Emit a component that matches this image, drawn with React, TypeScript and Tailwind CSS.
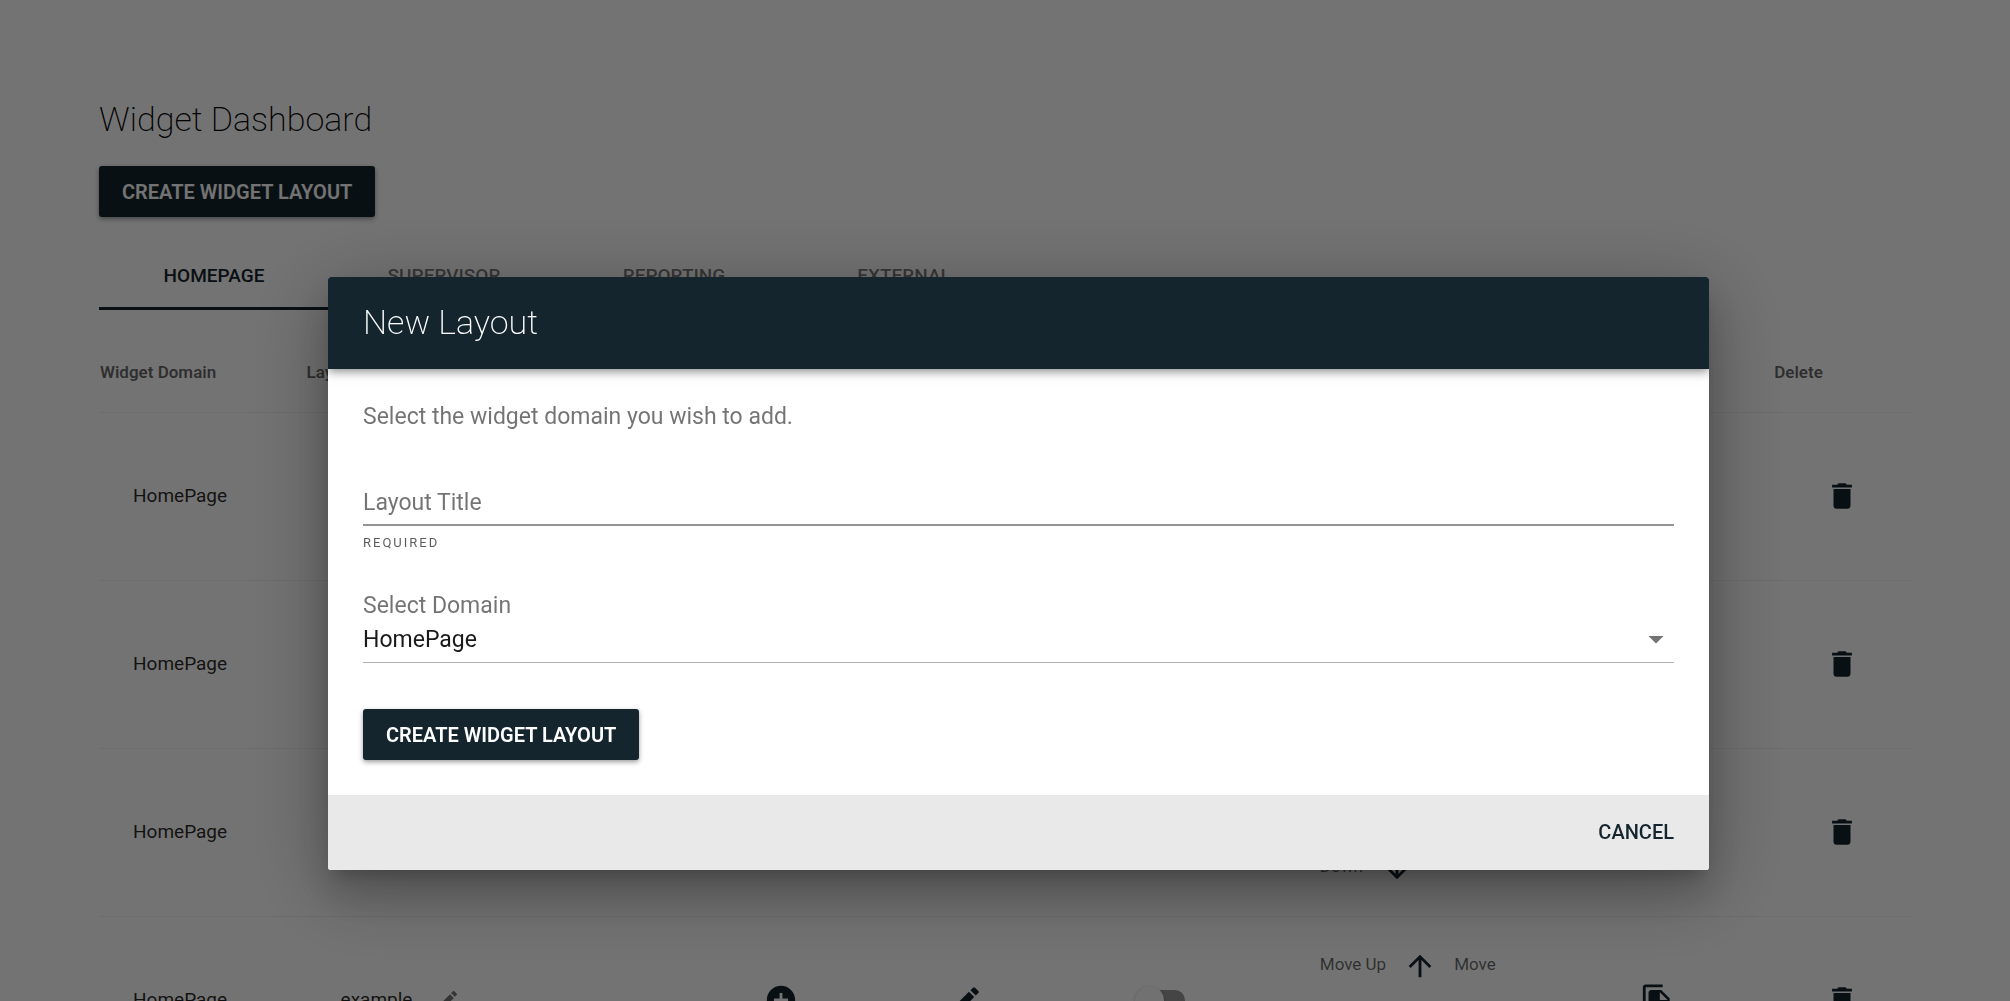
import React, { useState } from 'react';
import { MdAddCircle, MdArrowDownward, MdArrowDropDown, MdArrowUpward, MdDelete, MdEdit, MdFileCopy } from 'react-icons/md';

interface LayoutRow {
  id: number;
  domain: string;
  title: string;
  active: boolean;
}

const tabs = ['Homepage', 'Supervisor', 'Reporting', 'External'];

const domains = ['HomePage', 'Supervisor', 'Reporting', 'External'];

const columns = [
  { label: 'Widget Domain', width: 'w-[11.4%]' },
  { label: 'Layout Title', width: 'w-[22.4%]' },
  { label: 'Add Widget', width: 'w-[10.2%]' },
  { label: 'Edit', width: 'w-[11.2%]' },
  { label: 'Active', width: 'w-[10.3%]' },
  { label: 'Order', width: 'w-[16.7%]' },
  { label: 'Copy', width: 'w-[10.2%]' },
  { label: 'Delete', width: 'w-[7.6%]' },
];

const layouts: LayoutRow[] = [
  { id: 1, domain: 'HomePage', title: 'example', active: false },
  { id: 2, domain: 'HomePage', title: 'example', active: false },
  { id: 3, domain: 'HomePage', title: 'example', active: false },
  { id: 4, domain: 'HomePage', title: 'example', active: false },
];

const IconButton = ({ label, children }: { label: string; children: React.ReactNode }) => (
  <button type="button" aria-label={label} className="inline-block p-[17px] align-middle text-[#14252d]">
    {children}
  </button>
);

const CreateButton = () => (
  <button
    type="button"
    className="h-[51px] rounded-[3px] bg-[#14252d] px-[23px] text-[20px] font-semibold uppercase text-white shadow-[0_2px_5px_0_rgba(0,0,0,0.4)]"
  >
    Create Widget Layout
  </button>
);

const LayoutTable = () => (
  <table className="mt-[15px] w-full table-fixed border-collapse text-left">
    <thead>
      <tr className="h-[87px] border-b border-black/5">
        {columns.map(col => (
          <th key={col.label} className={`${col.width} pt-2 pl-px text-[17px] font-semibold text-black/60`}>
            {col.label}
          </th>
        ))}
      </tr>
    </thead>
    <tbody>
      {layouts.map(row => (
        <tr key={row.id} className="h-[168px] border-b border-black/5 text-[19px] text-black/85">
          <td className="pl-[34px]">{row.domain}</td>
          <td className="pl-[35px]">
            <div className="flex items-center gap-6">
              {row.title}
              <button type="button" aria-label="Rename" className="text-black/55">
                <MdEdit size={24} />
              </button>
            </div>
          </td>
          <td className="pl-[36px]">
            <IconButton label="Add widget"><MdAddCircle size={34} /></IconButton>
          </td>
          <td className="pl-[36px]">
            <IconButton label="Edit layout"><MdEdit size={34} /></IconButton>
          </td>
          <td className="pl-[36px]">
            <button type="button" role="switch" aria-checked={row.active} aria-label="Active" className="flex w-[50px] items-center">
              <span className="z-10 size-[29px] shrink-0 rounded-full bg-[#fafafa] shadow-[0_1px_3px_rgba(0,0,0,0.3)]" />
              <span className="-ml-6 h-5 w-[45px] rounded-full bg-[#999999]" />
            </button>
          </td>
          <td className="pr-16 pl-[34px] text-[17px] leading-[68px] text-black/60">
            <span>Move Up</span>
            <IconButton label="Move up"><MdArrowUpward size={34} /></IconButton>
            <span>Move</span>{' '}
            <span>Down</span>
            <IconButton label="Move down"><MdArrowDownward size={34} /></IconButton>
          </td>
          <td className="pl-[35px]">
            <IconButton label="Copy"><MdFileCopy size={34} /></IconButton>
          </td>
          <td className="pl-[35px]">
            <IconButton label="Delete"><MdDelete size={34} /></IconButton>
          </td>
        </tr>
      ))}
    </tbody>
  </table>
);

const NewLayoutDialog = () => {
  const [title, setTitle] = useState('');
  const [domain, setDomain] = useState('HomePage');

  return (
    <div
      role="dialog"
      aria-labelledby="dialog-title"
      className="w-full overflow-hidden rounded-[3px] bg-white shadow-[0_11px_15px_-7px_rgba(0,0,0,0.2),0_24px_38px_3px_rgba(0,0,0,0.14),0_16px_80px_8px_rgba(0,0,0,0.25)]"
    >
      <div className="relative flex h-[92px] items-center bg-[#14252d] px-[35px] pb-[2px] shadow-[0_2px_10px_0_rgba(0,0,0,0.5)]">
        <h2 id="dialog-title" className="text-[34px] font-extralight text-white">New Layout</h2>
      </div>
      <form className="flex flex-col items-start px-[35px] pt-[33px] pb-[35px] text-[23px] leading-[30px] text-black/55">
        <p>Select the widget domain you wish to add.</p>
        <input
          type="text"
          aria-label="Layout Title"
          aria-describedby="title-hint"
          placeholder="Layout Title"
          value={title}
          onChange={e => setTitle(e.target.value)}
          className="mt-[48px] h-[46px] w-full border-b-2 border-[#949494] text-black/85 outline-none placeholder:text-black/55"
        />
        <span id="title-hint" className="mt-[7px] text-[13px] leading-5 tracking-[2px] text-black/65 uppercase">Required</span>
        <label htmlFor="domain" className="mt-[38px]">Select Domain</label>
        <div className="relative w-full">
          <select
            id="domain"
            value={domain}
            onChange={e => setDomain(e.target.value)}
            className="block h-[42px] w-full appearance-none border-b border-[#b0b0b0] pb-1 text-black/90 outline-none"
          >
            {domains.map(d => (
              <option key={d}>{d}</option>
            ))}
          </select>
          <MdArrowDropDown size={36} className="pointer-events-none absolute top-0 right-0" />
        </div>
        <div className="mt-[46px] flex">
          <CreateButton />
        </div>
      </form>
      <div className="flex h-[75px] items-center justify-end bg-[#e9e9e9] px-[35px] pb-[2px]">
        <button type="button" className="text-[20px] font-medium text-[#14252d] uppercase">Cancel</button>
      </div>
    </div>
  );
};

export default function App() {
  return (
    <div className="h-screen overflow-hidden bg-white font-[Roboto,sans-serif]">
      <main className="px-[99px] pt-[95px]">
        <h1 className="mb-[23px] text-[34px] leading-[48px] font-extralight text-black">Widget Dashboard</h1>
        <CreateButton />
        <div role="tablist" className="mt-[28px] flex">
          {tabs.map((tab, i) => (
            <button
              key={tab}
              type="button"
              role="tab"
              aria-selected={i === 0}
              className={`h-[65px] w-[230px] border-b-[3px] text-[19px] font-medium uppercase ${
                i === 0 ? 'border-[#14252d] text-[#14252d]' : 'border-transparent text-black/55'
              }`}
            >
              {tab}
            </button>
          ))}
        </div>
        <LayoutTable />
      </main>
      <div className="fixed inset-0 z-20 flex items-start bg-black/55 pt-[277px] pr-[301px] pl-[328px]">
        <NewLayoutDialog />
      </div>
    </div>
  );
}
